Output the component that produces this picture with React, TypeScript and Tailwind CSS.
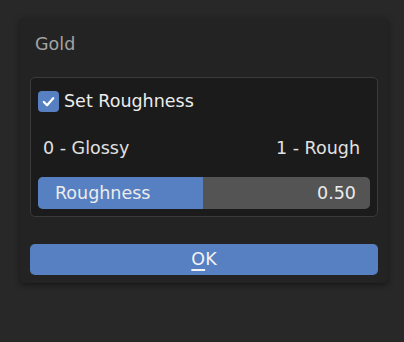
export default function App() {
  return (
    <div
      className="w-[404px] h-[342px] bg-[#282828] pt-[18px] pl-[20px]"
      style={{ fontFamily: '"DejaVu Sans", sans-serif' }}
    >
      {/* dialog */}
      <div className="w-[368px] h-[265px] rounded-[5px] bg-[#232323] shadow-[0_2px_6px_rgba(0,0,0,0.45)] px-[10px] flex flex-col">
        <div className="pt-[16px] h-[59px] pl-[5px] text-[17.5px] leading-[20px] text-[#a3a3a3]">Gold</div>

        <div className="h-[140px] rounded-[5px] border border-[#3a3a3a] bg-[#1b1b1b] flex flex-col">
          <div className="flex items-center pl-[7px] pt-[12px] h-[34px]">
            <div className="w-[21px] h-[21px] rounded-[4px] bg-[#5680c2] flex items-center justify-center">
              <svg width="15" height="15" viewBox="0 0 16 16" fill="none">
                <path d="M3 8.5 L6.5 12 L13 4.5" stroke="#ffffff" strokeWidth="2.4" strokeLinecap="round" strokeLinejoin="round" />
              </svg>
            </div>
            <span className="ml-[5px] text-[17.5px] leading-[20px] text-[#ececec]">Set Roughness</span>
          </div>

          <div className="flex justify-between pl-[12px] pr-[17px] mt-[24px] h-[24px] items-center text-[17.5px] text-[#e0e0e0]">
            <span>0 - Glossy</span>
            <span>1 - Rough</span>
          </div>

          <div className="mx-[7px] mt-[17px] h-[32px] rounded-[5px] bg-[#545454] overflow-hidden relative flex items-center">
            <div className="absolute left-0 top-0 bottom-0 w-[165px] bg-[#5680c2]" />
            <div className="relative flex-1 flex justify-between pl-[17px] pr-[14px] text-[17.5px] text-[#ececec]">
              <span>Roughness</span>
              <span>0.50</span>
            </div>
          </div>
        </div>

        <button className="mt-[27px] h-[31px] w-full rounded-[5px] bg-[#5680c2] text-[17.5px] text-[#f2f2f2] flex items-center justify-center">
          <span className="underline underline-offset-[4px] decoration-[1.5px]">O</span>K
        </button>
      </div>
    </div>
  );
}
